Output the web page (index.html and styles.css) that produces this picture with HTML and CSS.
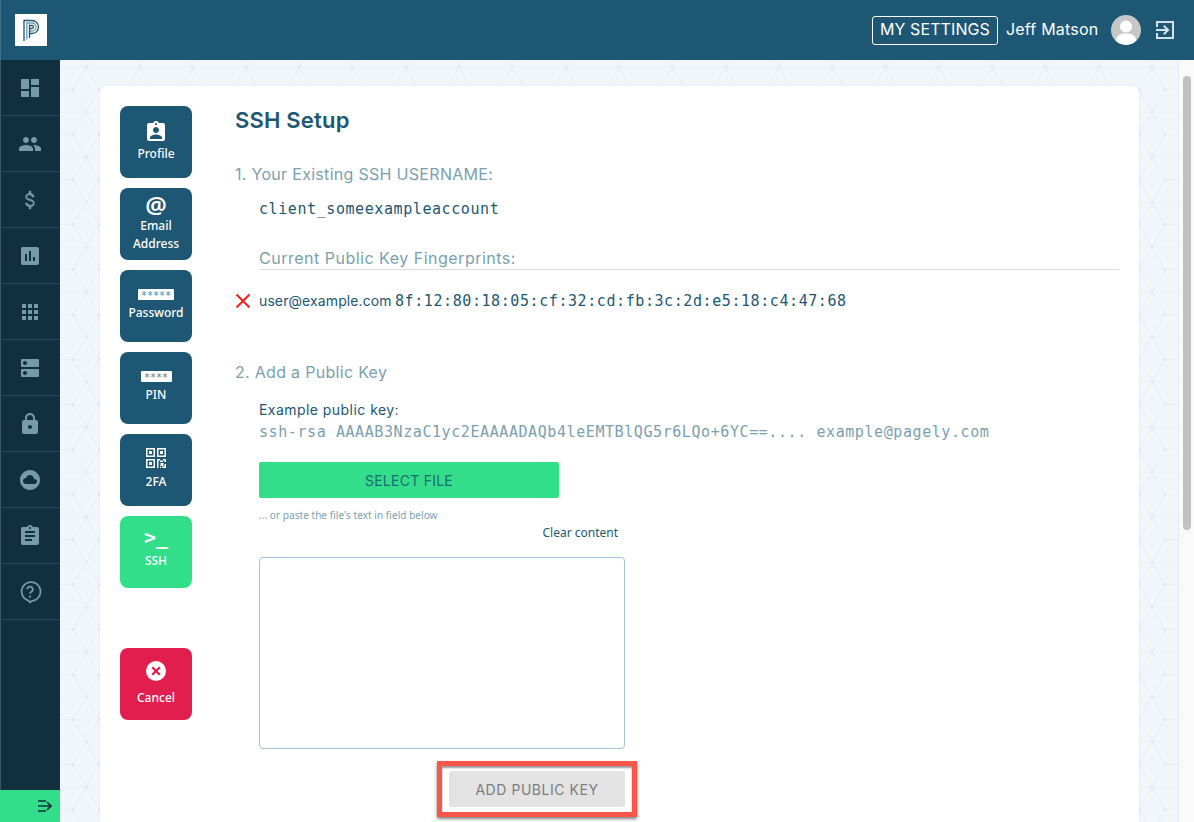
FILE: index.html
```html
<!DOCTYPE html>
<html lang="en">
<head>
<meta charset="utf-8">
<title>SSH Setup</title>
<link rel="stylesheet" href="styles.css">
</head>
<body>
<div class="app">
  <header class="topbar">
    <div class="logo">
      <svg viewBox="0 0 32 32" width="32" height="32"><path class="logo-outer" d="M9 27V6.500h8a6.500 6.500 0 0 1 0 13h-2.500"/><path class="logo-inner" d="M11.800 25.500V9h5.200a4 4 0 0 1 0 8h-2.500"/><path class="logo-outer" d="M14.500 24V11.500H17a1.500 1.500 0 0 1 0 3h-2.500"/></svg>
    </div>
    <div class="topbar-right">
      <a class="settings-btn">MY SETTINGS</a>
      <span class="username">Jeff Matson</span>
      <span class="avatar">
        <svg viewBox="0 0 30 30" width="30" height="30"><circle cx="15" cy="11.500" r="6"/><path d="M4.500 26c1-6 5-7.500 10.500-7.500S24.500 20 25.500 26a15 15 0 0 1-21 0z"/></svg>
      </span>
      <svg class="logout" viewBox="0 0 24 24" width="24" height="24"><path d="M10.090 15.590L11.500 17l5-5-5-5-1.410 1.410L12.670 11H3v2h9.670l-2.580 2.590zM21 3H3v6h2V5h14v14H5v-4H3v6h18V3z"/></svg>
    </div>
  </header>
  <div class="body">
    <nav class="sidebar">
      <a class="side-item"><svg viewBox="0 0 24 24"><path d="M3 13h8V3H3v10zm0 8h8v-6H3v6zm10 0h8V11h-8v10zm0-18v6h8V3h-8z"/></svg></a>
      <a class="side-item"><svg viewBox="0 0 24 24"><path d="M16 11c1.660 0 2.990-1.340 2.990-3S17.660 5 16 5c-1.660 0-3 1.340-3 3s1.340 3 3 3zm-8 0c1.660 0 2.990-1.340 2.990-3S9.660 5 8 5C6.340 5 5 6.340 5 8s1.340 3 3 3zm0 2c-2.330 0-7 1.170-7 3.500V19h14v-2.500c0-2.330-4.670-3.500-7-3.500zm8 0c-.290 0-.620.020-.970.050 1.160.840 1.970 1.970 1.970 3.450V19h6v-2.500c0-2.330-4.670-3.500-7-3.500z"/></svg></a>
      <a class="side-item"><svg class="dollar" viewBox="0 0 24 24"><path d="M11.800 10.900c-2.270-.590-3-1.200-3-2.150 0-1.090 1.010-1.850 2.700-1.850 1.780 0 2.440.850 2.500 2.100h2.210c-.070-1.720-1.120-3.300-3.210-3.810V3h-2v2.160c-1.940.420-3.500 1.680-3.500 3.610 0 2.310 1.910 3.460 4.700 4.130 2.500.600 3 1.480 3 2.410 0 .690-.490 1.790-2.700 1.790-2.060 0-2.870-.920-2.980-2.100h-2.200c.120 2.190 1.760 3.420 3.680 3.830V21h2v-2.150c1.950-.370 3.500-1.500 3.500-3.550 0-2.840-2.430-3.810-4.700-4.400z"/></svg></a>
      <a class="side-item"><svg viewBox="0 0 24 24"><path d="M19 3H5c-1.100 0-2 .900-2 2v14c0 1.100.900 2 2 2h14c1.100 0 2-.900 2-2V5c0-1.100-.900-2-2-2zM9 17H7v-7h2v7zm4 0h-2V7h2v10zm4 0h-2v-4h2v4z"/></svg></a>
      <a class="side-item"><svg viewBox="0 0 24 24"><path d="M4 8h4V4H4v4zm6 12h4v-4h-4v4zm-6 0h4v-4H4v4zm0-6h4v-4H4v4zm6 0h4v-4h-4v4zm6-10v4h4V4h-4zm-6 4h4V4h-4v4zm6 6h4v-4h-4v4zm0 6h4v-4h-4v4z"/></svg></a>
      <a class="side-item"><svg viewBox="0 0 24 24"><path d="M20 13H4c-.550 0-1 .450-1 1v6c0 .550.450 1 1 1h16c.550 0 1-.450 1-1v-6c0-.550-.450-1-1-1zM7 19c-1.100 0-2-.900-2-2s.900-2 2-2 2 .900 2 2-.900 2-2 2zM20 3H4c-.550 0-1 .450-1 1v6c0 .550.450 1 1 1h16c.550 0 1-.450 1-1V4c0-.550-.450-1-1-1zM7 9c-1.100 0-2-.900-2-2s.900-2 2-2 2 .900 2 2-.900 2-2 2z"/></svg></a>
      <a class="side-item"><svg viewBox="0 0 24 24"><path d="M18 8h-1V6c0-2.760-2.240-5-5-5S7 3.240 7 6v2H6c-1.100 0-2 .900-2 2v10c0 1.100.900 2 2 2h12c1.100 0 2-.900 2-2V10c0-1.100-.900-2-2-2zm-6 9c-1.100 0-2-.900-2-2s.900-2 2-2 2 .900 2 2-.900 2-2 2zm3.100-9H8.900V6c0-1.710 1.390-3.100 3.100-3.100 1.710 0 3.100 1.390 3.100 3.100v2z"/></svg></a>
      <a class="side-item"><svg viewBox="0 0 24 24"><path d="M12 2C6.480 2 2 6.480 2 12s4.480 10 10 10 10-4.480 10-10S17.520 2 12 2zm4.500 14H8c-1.660 0-3-1.340-3-3s1.340-3 3-3l.140.010C8.580 8.280 10.130 7 12 7c2.210 0 4 1.790 4 4h.500c1.380 0 2.500 1.120 2.500 2.500S17.880 16 16.500 16z"/></svg></a>
      <a class="side-item"><svg viewBox="0 0 24 24"><path d="M19 3h-4.180C14.400 1.840 13.300 1 12 1c-1.300 0-2.400.840-2.820 2H5c-1.100 0-2 .900-2 2v14c0 1.100.900 2 2 2h14c1.100 0 2-.900 2-2V5c0-1.100-.900-2-2-2zm-7 0c.550 0 1 .450 1 1s-.450 1-1 1-1-.450-1-1 .450-1 1-1zm2 14H7v-2h7v2zm3-4H7v-2h10v2zm0-4H7V7h10v2z"/></svg></a>
      <a class="side-item"><svg class="help" viewBox="0 0 24 24"><path class="help-ring" d="M12 21.500l-1.500-1.600A8.700 8.700 0 1 1 14 20.200z"/><path class="help-q" d="M9.500 9.500a2.500 2.500 0 1 1 3.700 2.200c-.8.500-1.200 1-1.200 2"/><circle cx="12" cy="16.300" r="1"/></svg></a>
      <div class="side-spacer"></div>
      <a class="side-toggle">
        <svg viewBox="0 0 14 14" width="14" height="14"><path d="M0 2h8M0 7h12M0 12h8M9 3l4 4-4 4"/></svg>
      </a>
    </nav>
    <main class="main">
      <svg class="hex-bg" width="100%" height="100%">
        <defs>
          <pattern id="hex" x="13" y="7" width="53.300" height="45" patternUnits="userSpaceOnUse">
            <path class="hex-line" d="M13 0L26 22.500L13 45L0 22.500ZM0 0H53.300M26 22.500H53.300"/>
            <circle class="hex-node" cx="13" cy="0" r="1.500"/>
            <circle class="hex-node" cx="13" cy="45" r="1.500"/>
            <circle class="hex-node" cx="26" cy="22.500" r="1.500"/>
            <circle class="hex-node" cx="0" cy="22.500" r="1.500"/>
            <circle class="hex-node" cx="53.300" cy="22.500" r="1.500"/>
          </pattern>
        </defs>
        <rect width="100%" height="100%" fill="url(#hex)"/>
      </svg>
      <section class="card">
        <div class="tabs">
          <a class="tab">
            <svg class="tab-icon" viewBox="0 0 24 24"><path d="M19 3h-4.180C14.400 1.840 13.300 1 12 1c-1.300 0-2.400.840-2.820 2H5c-1.100 0-2 .900-2 2v14c0 1.100.900 2 2 2h14c1.100 0 2-.900 2-2V5c0-1.100-.900-2-2-2zm-7 0c.550 0 1 .450 1 1s-.450 1-1 1-1-.450-1-1 .450-1 1-1zm0 4c1.660 0 3 1.340 3 3s-1.340 3-3 3-3-1.340-3-3 1.340-3 3-3zm6 12H6v-1.400c0-2 4-3.100 6-3.100s6 1.100 6 3.100V19z"/></svg>
            <span>Profile</span>
          </a>
          <a class="tab">
            <span class="tab-at">@</span>
            <span>Email<br>Address</span>
          </a>
          <a class="tab">
            <span class="chip chip-pass">*****</span>
            <span>Password</span>
          </a>
          <a class="tab">
            <span class="chip chip-pin">****</span>
            <span>PIN</span>
          </a>
          <a class="tab">
            <svg class="tab-qr" viewBox="0 0 20 20"><path d="M0 0h9v9H0zM1.500 1.500v6h6v-6zM3 3h3v3H3zM11 0h9v9h-9zM12.500 1.500v6h6v-6zM14 3h3v3h-3zM0 11h9v9H0zM1.500 12.500v6h6v-6zM3 14h3v3H3zM11 11h3v1.500h3V11h3v3h-1.500v-1.500H17V14h-3v-1.500h-1.500V20H11zM14.500 15h3v3h-3zM18.500 16H20v4h-4v-1.500h2.500zM14 18.500h1V20h-1z" fill-rule="evenodd"/></svg>
            <span>2FA</span>
          </a>
          <a class="tab tab-active">
            <span class="tab-term">&gt;_</span>
            <span>SSH</span>
          </a>
          <a class="tab tab-cancel">
            <svg class="tab-x" viewBox="0 0 20 20"><circle cx="10" cy="10" r="10"/><path d="M6.200 6.200l7.600 7.600M13.800 6.200l-7.600 7.600"/></svg>
            <span>Cancel</span>
          </a>
        </div>
        <div class="content">
          <h1 class="title">SSH Setup</h1>
          <h2 class="step step-one">1. Your Existing SSH USERNAME:</h2>
          <div class="mono account">client_someexampleaccount</div>
          <h3 class="fp-head">Current Public Key Fingerprints:</h3>
          <div class="fp-row">
            <svg class="fp-x" viewBox="0 0 16 16" width="16" height="16"><path d="M1.500 1.500l13 13M14.500 1.500l-13 13"/></svg>
            <span class="fp-mail">user@example.com</span>
            <span class="mono">8f:12:80:18:05:cf:32:cd:fb:3c:2d:e5:18:c4:47:68</span>
          </div>
          <h2 class="step step-two">2. Add a Public Key</h2>
          <div class="example-label">Example public key:</div>
          <div class="mono example-key">ssh-rsa AAAAB3NzaC1yc2EAAAADAQb4leEMTBlQG5r6LQo+6YC==.... example@pagely.com</div>
          <a class="select-file">SELECT FILE</a>
          <div class="paste-hint">... or paste the file's text in field below</div>
          <div class="clear-row"><a>Clear content</a></div>
          <textarea class="key-input"></textarea>
          <div class="highlight"><button class="add-key" type="button">ADD PUBLIC KEY</button></div>
        </div>
      </section>
    </main>
    <div class="scrollbar"><div class="thumb"></div></div>
  </div>
</div>
</body>
</html>
```

FILE: styles.css
```css
* { box-sizing: border-box; }
html, body { margin: 0; height: 100%; overflow: hidden; }
body { font-family: Inter, "Noto Sans", sans-serif; color: #1d5773; }
.app { display: flex; flex-direction: column; height: 100vh; }

.topbar { flex: 0 0 60px; background: #1d5773; display: flex; align-items: center; justify-content: space-between; padding: 0 17px 0 15px; border-left: 1px solid #3f7188; }
.logo { width: 32px; height: 32px; background: #fff; margin-left: -1px; }
.logo svg { display: block; }
.logo-outer, .logo-inner { fill: none; stroke-width: 1.300; }
.logo-outer { stroke: #1d5773; }
.logo-inner { stroke: #6b9db5; }
.topbar-right { display: flex; align-items: center; }
.settings-btn { height: 29px; width: 126px; border: 1px solid #fff; border-radius: 3px; color: #fff; font-size: 16px; line-height: 25px; text-align: center; letter-spacing: .1px; }
.username { color: #fff; font-size: 16px; margin-left: 8px; width: 105px; letter-spacing: .2px; white-space: nowrap; padding-bottom: 2px; }
.avatar { width: 30px; height: 30px; border-radius: 50%; background: #c6c6c6; overflow: hidden; }
.avatar svg { display: block; fill: #fff; }
.logout { fill: #d4e1e8; margin-left: 12px; }

.body { flex: 1; display: flex; min-height: 0; }
.sidebar { flex: 0 0 60px; background: #122f3f; display: flex; flex-direction: column; border-left: 1px solid #3d5866; }
.side-item { flex: 0 0 56px; border-bottom: 1px solid #2a4855; display: flex; align-items: center; justify-content: center; margin-left: -1px; }
.side-item svg { width: 24px; height: 24px; fill: #769aab; }
.side-item .dollar { stroke: #769aab; stroke-width: .4; }
.side-item .help { width: 26px; height: 26px; }
.help-ring, .help-q { fill: none; stroke: #769aab; stroke-width: 1.600; }
.side-spacer { flex: 1; }
.side-toggle { flex: 0 0 32px; background: #33de8b; margin-left: -1px; display: flex; align-items: center; justify-content: flex-end; padding-right: 8px; }
.side-toggle svg { fill: none; stroke: #122f3f; stroke-width: 1.700; }

.main { flex: 1; position: relative; background: #f1f6fa; display: flex; padding: 26px 39px 0 40px; border-right: 1px solid #e8ebed; min-width: 0; }
.hex-bg { position: absolute; top: 0; left: 0; }
.hex-line { fill: none; stroke: #e9f1f6; stroke-width: 1; }
.hex-node { fill: #dbe9f1; }
.card { position: relative; flex: 1; background: #fff; border-radius: 6px 6px 0 0; display: flex; padding: 20px 20px 0; box-shadow: 0 0 2px rgba(120, 150, 170, .2); }

.tabs { flex: 0 0 72px; display: flex; flex-direction: column; gap: 10px; margin-right: 43px; }
.tab { flex: 0 0 72px; border-radius: 8px; background: #1d5773; color: #fff; font-family: "Noto Sans", sans-serif; font-size: 12px; font-weight: 500; line-height: 18px; display: flex; flex-direction: column; align-items: center; justify-content: center; text-align: center; padding-bottom: 2px; }
.tab-icon { width: 24px; height: 24px; fill: #fff; margin-bottom: 1px; }
.tab-at { font-size: 24px; font-weight: 600; line-height: 24px; }
.chip { display: block; height: 11px; overflow: hidden; background: #fff; color: #4f7f96; font-family: "DejaVu Sans Mono", monospace; font-size: 10px; line-height: 14px; margin-bottom: 4px; border-radius: 1px; text-align: center; }
.chip-pass { width: 36px; }
.chip-pin { width: 31px; }
.tab-qr { width: 20px; height: 20px; fill: #fff; margin-bottom: 5px; }
.tab-term { font-family: "DejaVu Sans Mono", monospace; font-size: 20px; font-weight: 700; line-height: 10px; margin-bottom: 10px; }
.tab-active { background: #33de8b; }
.tab-cancel { background: #e21e4e; margin-top: 50px; padding-bottom: 0; }
.tab-x { width: 20px; height: 20px; margin-bottom: 8px; }
.tab-x circle { fill: #fff; }
.tab-x path { fill: none; stroke: #e21e4e; stroke-width: 2.200; }

.content { flex: 1; min-width: 0; }
.title { margin: 0; font-size: 22px; font-weight: 600; line-height: 28px; letter-spacing: .2px; color: #1d5773; }
.step { margin: 0; font-size: 16px; font-weight: 400; line-height: 20px; color: #7b9fb0; letter-spacing: .3px; }
.step-one { margin-top: 30px; }
.step-two { margin-top: 51px; }
.mono { font-family: "DejaVu Sans Mono", monospace; font-size: 15px; letter-spacing: .58px; line-height: 20px; color: #1d5773; }
.account { margin: 15px 0 0 24px; }
.fp-head { margin: 29px 0 0 24px; font-size: 16px; font-weight: 400; line-height: 21px; color: #7b9fb0; letter-spacing: .5px; border-bottom: 1px solid #dcdcdc; height: 22px; }
.fp-row { margin-top: 21px; display: flex; align-items: center; line-height: 20px; }
.fp-x { fill: none; stroke: #f02020; stroke-width: 2; margin-right: 8px; }
.fp-mail { font-size: 14px; letter-spacing: .1px; width: 136px; white-space: nowrap; }
.example-label { margin: 18px 0 0 24px; font-size: 14px; line-height: 20px; letter-spacing: .45px; }
.example-key { margin: 2px 0 0 24px; color: #7b9fb0; white-space: nowrap; }
.select-file { display: block; width: 300px; height: 36px; margin: 20px 0 0 24px; border-radius: 2px; background: #33de8b; font-size: 14px; line-height: 38px; text-align: center; color: #1d6b74; letter-spacing: .25px; }
.paste-hint { margin: 10px 0 0 24px; font-family: "Noto Sans", sans-serif; font-size: 10px; line-height: 14px; color: #7b9fb0; letter-spacing: .05px; }
.clear-row { margin: 3px 0 0 24px; width: 359px; text-align: right; font-family: "Noto Sans", sans-serif; font-size: 12px; line-height: 16px; }
.key-input { display: block; width: 366px; height: 192px; margin: 16px 0 0 24px; border: 1px solid #a3c4de; border-radius: 4px; background: #fff; resize: none; outline: none; }
.highlight { width: 200px; height: 56px; margin: 12px 0 0 202px; border: 5px solid #f9564a; padding: 5px 6px 5px 7px; background: #fff; box-shadow: 0 2px 3px rgba(0, 0, 0, .5), inset 0 2px 2px rgba(0, 0, 0, .4); }
.add-key { display: block; width: 176px; height: 36px; border: 0; border-radius: 2px; background: #e3e3e3; color: #7d7d7d; font-family: Inter, sans-serif; font-size: 14px; letter-spacing: .55px; padding: 0; }

.scrollbar { flex: 0 0 15px; background: #fafafa; padding: 16px 3px 0 4px; }
.thumb { height: 454px; background: #c1c1c1; border-radius: 4px; }
```
